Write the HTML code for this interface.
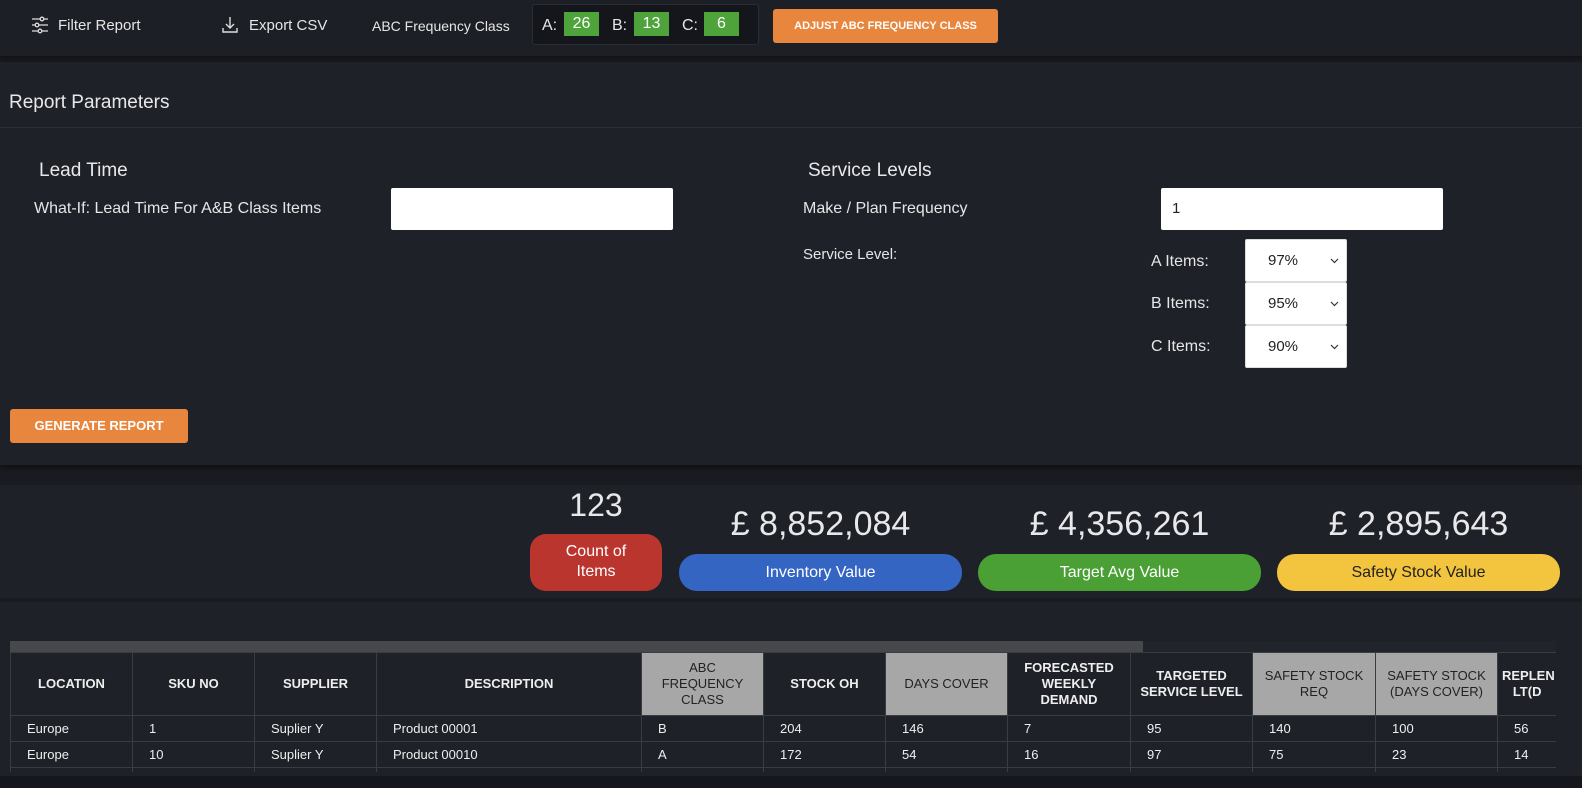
<!DOCTYPE html>
<html><head><style>
*{box-sizing:border-box;margin:0;padding:0}
body{width:1582px;height:788px;overflow:hidden;background:#191b21;font-family:"Liberation Sans",sans-serif;color:#e8e8ea;position:relative}
.abs{position:absolute}
.top{left:0;top:0;width:1582px;height:56px;background:#1d1f26;box-shadow:0 2px 4px #111}
.t{font-size:15px;color:#e6e6e6;white-space:nowrap}
.panel{background:#1f2129}
.inp{background:#fff;border-radius:2px;color:#222}
.sel{background:#fff;border:1px solid #ddd;border-radius:2px;color:#222;font-size:15px;padding:12px 0 0 22px}
.sel svg{position:absolute;right:7px;top:18px}
.pill{color:#fff;text-align:center;font-size:16px}
table{border-collapse:collapse;font-size:13px;color:#eee}
td,th{border:1px solid #3a3c44;height:26px;padding-left:16px;text-align:left;font-weight:normal}
th{height:63px;text-align:center;padding:0 4px;font-weight:bold;font-size:13px;line-height:16px}
th.g{background:#a7a7a7;color:#222;font-weight:normal}
</style></head><body>
<div class="abs top"></div>
<svg class="abs" style="left:31px;top:16px" width="18" height="18" viewBox="0 0 18 18" stroke="#ddd" fill="none" stroke-width="1.3"><path d="M1 3h16M1 9h16M1 15h16"/><circle cx="11" cy="3" r="1.8" fill="#1d1f26"/><circle cx="6" cy="9" r="1.8" fill="#1d1f26"/><circle cx="9" cy="15" r="1.8" fill="#1d1f26"/></svg>
<div class="abs t" style="left:58px;top:17px">Filter Report</div>
<svg class="abs" style="left:221px;top:16px" width="18" height="18" viewBox="0 0 18 18" stroke="#ddd" fill="none" stroke-width="1.4"><path d="M9 1v11M5 8l4 4 4-4M2 12v4h14v-4"/></svg>
<div class="abs t" style="left:249px;top:17px">Export CSV</div>
<div class="abs t" style="left:372px;top:18px;font-size:14px">ABC Frequency Class</div>
<div class="abs" style="left:532px;top:4px;width:227px;height:41px;background:#15161b;border:1px solid #2c2e35;border-radius:3px"></div>
<div class="abs t" style="left:542px;top:17px;font-size:16px">A:</div>
<div class="abs" style="left:564px;top:12px;width:35px;height:24px;background:#4ea33a;color:#fff;text-align:center;font-size:16px;line-height:24px">26</div>
<div class="abs t" style="left:612px;top:17px;font-size:16px">B:</div>
<div class="abs" style="left:634px;top:12px;width:35px;height:24px;background:#4ea33a;color:#fff;text-align:center;font-size:16px;line-height:24px">13</div>
<div class="abs t" style="left:682px;top:17px;font-size:16px">C:</div>
<div class="abs" style="left:704px;top:12px;width:35px;height:24px;background:#4ea33a;color:#fff;text-align:center;font-size:16px;line-height:24px">6</div>
<div class="abs" style="left:773px;top:9px;width:225px;height:34px;background:#e8863e;border-radius:3px;color:#fff;font-size:11px;font-weight:bold;text-align:center;line-height:34px">ADJUST ABC FREQUENCY CLASS</div>

<div class="abs panel" style="left:0;top:62px;width:1582px;height:403px;box-shadow:0 3px 4px #111"></div>
<div class="abs" style="left:9px;top:92px;font-size:19px">Report Parameters</div>
<div class="abs" style="left:0;top:127px;width:1582px;height:1px;background:#2c2e36"></div>
<div class="abs" style="left:39px;top:160px;font-size:19px">Lead Time</div>
<div class="abs t" style="left:34px;top:200px;font-size:16px">What-If: Lead Time For A&amp;B Class Items</div>
<div class="abs inp" style="left:391px;top:188px;width:282px;height:42px"></div>
<div class="abs" style="left:808px;top:160px;font-size:19px">Service Levels</div>
<div class="abs t" style="left:803px;top:200px;font-size:16px">Make / Plan Frequency</div>
<div class="abs inp" style="left:1161px;top:188px;width:282px;height:42px;padding:12px 0 0 11px;font-size:15px">1</div>
<div class="abs t" style="left:803px;top:246px;font-size:15px">Service Level:</div>
<div class="abs t" style="left:1151px;top:253px;font-size:16px">A Items:</div>
<div class="abs t" style="left:1151px;top:295px;font-size:16px">B Items:</div>
<div class="abs t" style="left:1151px;top:338px;font-size:16px">C Items:</div>
<div class="abs sel" style="left:1245px;top:239px;width:102px;height:43px">97%<svg width="9" height="6" viewBox="0 0 9 6"><path d="M1 1l3.5 3.5L8 1" stroke="#333" fill="none" stroke-width="1.2"/></svg></div>
<div class="abs sel" style="left:1245px;top:282px;width:102px;height:43px">95%<svg width="9" height="6" viewBox="0 0 9 6"><path d="M1 1l3.5 3.5L8 1" stroke="#333" fill="none" stroke-width="1.2"/></svg></div>
<div class="abs sel" style="left:1245px;top:325px;width:102px;height:43px">90%<svg width="9" height="6" viewBox="0 0 9 6"><path d="M1 1l3.5 3.5L8 1" stroke="#333" fill="none" stroke-width="1.2"/></svg></div>
<div class="abs" style="left:10px;top:409px;width:178px;height:34px;background:#e8863e;border-radius:3px;color:#fff;font-size:13px;font-weight:bold;text-align:center;line-height:34px">GENERATE REPORT</div>

<div class="abs panel" style="left:0;top:485px;width:1582px;height:113px"></div>
<div class="abs" style="left:530px;top:487px;width:132px;text-align:center;font-size:32px">123</div>
<div class="abs pill" style="left:530px;top:534px;width:132px;height:57px;background:#bb352f;border-radius:16px;padding-top:8px;line-height:20px">Count of<br>Items</div>
<div class="abs" style="left:679px;top:505px;width:283px;text-align:center;font-size:34px">£ 8,852,084</div>
<div class="abs pill" style="left:679px;top:554px;width:283px;height:37px;background:#3565c3;border-radius:18px;line-height:37px">Inventory Value</div>
<div class="abs" style="left:978px;top:505px;width:283px;text-align:center;font-size:34px">£ 4,356,261</div>
<div class="abs pill" style="left:978px;top:554px;width:283px;height:37px;background:#4aa034;border-radius:18px;line-height:37px">Target Avg Value</div>
<div class="abs" style="left:1277px;top:505px;width:283px;text-align:center;font-size:34px">£ 2,895,643</div>
<div class="abs pill" style="left:1277px;top:554px;width:283px;height:37px;background:#f3c43e;border-radius:18px;line-height:37px;color:#222">Safety Stock Value</div>

<div class="abs panel" style="left:0;top:602px;width:1582px;height:174px"></div>
<div class="abs" style="left:10px;top:641px;width:1546px;height:11px;background:#22242c"></div>
<div class="abs" style="left:10px;top:641px;width:1133px;height:11px;background:#47484c"></div>
<div class="abs" style="left:10px;top:652px;width:1546px;height:120px;overflow:hidden">
<table style="width:1620px;table-layout:fixed">
<colgroup><col style="width:122px"><col style="width:122px"><col style="width:122px"><col style="width:265px"><col style="width:122px"><col style="width:122px"><col style="width:122px"><col style="width:123px"><col style="width:122px"><col style="width:123px"><col style="width:122px"><col style="width:133px"></colgroup>
<tr><th>LOCATION</th><th>SKU NO</th><th>SUPPLIER</th><th>DESCRIPTION</th><th class="g">ABC<br>FREQUENCY<br>CLASS</th><th>STOCK OH</th><th class="g">DAYS COVER</th><th>FORECASTED<br>WEEKLY<br>DEMAND</th><th>TARGETED<br>SERVICE LEVEL</th><th class="g">SAFETY STOCK<br>REQ</th><th class="g">SAFETY STOCK<br>(DAYS COVER)</th><th style="text-align:left">REPLEN<br>&nbsp;&nbsp;&nbsp;LT(D</th></tr>
<tr><td>Europe</td><td>1</td><td>Suplier Y</td><td>Product 00001</td><td>B</td><td>204</td><td>146</td><td>7</td><td>95</td><td>140</td><td>100</td><td>56</td></tr>
<tr><td>Europe</td><td>10</td><td>Suplier Y</td><td>Product 00010</td><td>A</td><td>172</td><td>54</td><td>16</td><td>97</td><td>75</td><td>23</td><td>14</td></tr>
<tr><td>&nbsp;</td><td></td><td></td><td></td><td></td><td></td><td></td><td></td><td></td><td></td><td></td><td></td></tr>
</table></div>
<div class="abs" style="left:0;top:776px;width:1582px;height:12px;background:#16171c"></div>
</body></html>
